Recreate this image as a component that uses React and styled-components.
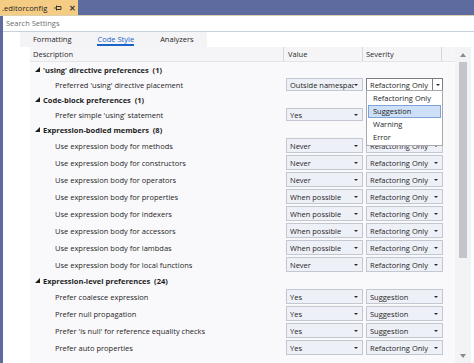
import React from 'react'
import styled, { createGlobalStyle } from 'styled-components'

const GlobalStyle = createGlobalStyle`
  html, body {
    margin: 0;
    padding: 0;
    background: #5d6b9e;
  }
  body {
    font-family: "Open Sans", "Noto Sans", sans-serif;
    color: #1e1e1e;
  }
`

const groups = [
  {
    title: "'using' directive preferences",
    count: 1,
    rowHeight: 15,
    items: [
      { label: "Preferred 'using' directive placement", value: 'Outside namespac', severity: 'Refactoring Only', open: true },
    ],
  },
  {
    title: 'Code-block preferences',
    count: 1,
    rowHeight: 15,
    items: [{ label: "Prefer simple 'using' statement", value: 'Yes', severity: 'Suggestion' }],
  },
  {
    title: 'Expression-bodied members',
    count: 8,
    rowHeight: 17,
    items: [
      { label: 'Use expression body for methods', value: 'Never', severity: 'Refactoring Only' },
      { label: 'Use expression body for constructors', value: 'Never', severity: 'Refactoring Only' },
      { label: 'Use expression body for operators', value: 'Never', severity: 'Refactoring Only' },
      { label: 'Use expression body for properties', value: 'When possible', severity: 'Refactoring Only' },
      { label: 'Use expression body for indexers', value: 'When possible', severity: 'Refactoring Only' },
      { label: 'Use expression body for accessors', value: 'When possible', severity: 'Refactoring Only' },
      { label: 'Use expression body for lambdas', value: 'When possible', severity: 'Refactoring Only' },
      { label: 'Use expression body for local functions', value: 'Never', severity: 'Refactoring Only' },
    ],
  },
  {
    title: 'Expression-level preferences',
    count: 24,
    rowHeight: 17,
    items: [
      { label: 'Prefer coalesce expression', value: 'Yes', severity: 'Suggestion' },
      { label: 'Prefer null propagation', value: 'Yes', severity: 'Suggestion' },
      { label: "Prefer 'is null' for reference equality checks", value: 'Yes', severity: 'Suggestion' },
      { label: 'Prefer auto properties', value: 'Yes', severity: 'Refactoring Only' },
    ],
  },
]

const severities = ['Refactoring Only', 'Suggestion', 'Warning', 'Error']

function Combo({ text, height, offset, open }) {
  return (
    <ComboBox $h={height} $offset={offset} $open={open}>
      <ComboText>{text}</ComboText>
      {open ? (
        <DropButton>
          <Caret />
        </DropButton>
      ) : (
        <Caret $right />
      )}
      {open && (
        <Popup>
          {severities.map((s) => (
            <PopupItem key={s} $active={s === 'Suggestion'}>
              {s}
            </PopupItem>
          ))}
        </Popup>
      )}
    </ComboBox>
  )
}

export default function App() {
  return (
    <>
      <GlobalStyle />
      <Window>
        <TabStrip>
          <DocTab>
            <DocTitle>.editorconfig</DocTitle>
            <svg width="8" height="6" viewBox="0 0 8 6">
              <path d="M0 3H2.5M2.5 0.5V5.5M2.5 1.5H7V4.5H2.5" fill="none" stroke="#3a3a3a" strokeWidth="1" />
            </svg>
            <CloseGlyph>✕</CloseGlyph>
          </DocTab>
        </TabStrip>
        <Panel>
          <SearchBox>Search Settings</SearchBox>
          <Tabs>
            <TabLink>Formatting</TabLink>
            <TabLink $active>Code Style</TabLink>
            <TabLink>Analyzers</TabLink>
          </Tabs>
          <TableArea>
            <Grid>
              <HeaderRow>
                <HeaderCell $pad={3}>Description</HeaderCell>
                <HeaderCell $pad={4}>Value</HeaderCell>
                <HeaderCell $pad={3}>Severity</HeaderCell>
                <HeaderTail />
              </HeaderRow>
              {groups.map((g) => (
                <React.Fragment key={g.title}>
                  <GroupRow>
                    <svg width="5" height="5" viewBox="0 0 5 5">
                      <polygon points="5,0 5,5 0,5" fill="#1e1e1e" />
                    </svg>
                    <span>
                      {g.title}&nbsp;&nbsp;({g.count})
                    </span>
                  </GroupRow>
                  {g.items.map((it) => (
                    <ItemRow key={it.label} $h={g.rowHeight}>
                      <ItemLabel>{it.label}</ItemLabel>
                      <Combo text={it.value} height={g.rowHeight - 2} offset={2} />
                      <Combo text={it.severity} height={g.rowHeight - 2} offset={3} open={it.open} />
                    </ItemRow>
                  ))}
                </React.Fragment>
              ))}
            </Grid>
            <ScrollBar>
              <ScrollArrow>
                <svg width="6" height="4" viewBox="0 0 6 4">
                  <polygon points="0,4 6,4 3,0" fill="#8a8a8e" />
                </svg>
              </ScrollArrow>
              <Track>
                <Thumb />
              </Track>
              <ScrollArrow>
                <svg width="6" height="4" viewBox="0 0 6 4">
                  <polygon points="0,0 6,0 3,4" fill="#8a8a8e" />
                </svg>
              </ScrollArrow>
            </ScrollBar>
          </TableArea>
        </Panel>
      </Window>
    </>
  )
}

const Window = styled.div`
  display: flex;
  flex-direction: column;
  width: 474px;
  height: 363px;
  overflow: hidden;
  background: #5d6b9e;
`

const TabStrip = styled.div`
  display: flex;
  height: 15px;
  flex-shrink: 0;
  border-bottom: 1px solid #ddd0ae;
`

const DocTab = styled.div`
  display: flex;
  align-items: center;
  gap: 7px;
  width: 78px;
  padding-left: 2px;
  box-sizing: border-box;
  background: #f5cc84;
  font-size: 7.6px;
  color: #1e1e1e;
`

const DocTitle = styled.span`
  letter-spacing: 0.05px;
`

const CloseGlyph = styled.span`
  font-size: 7.5px;
  font-weight: 700;
  color: #3a3a3a;
`

const Panel = styled.div`
  flex: 1;
  display: flex;
  flex-direction: column;
  margin-left: 3px;
  background: #fff;
  min-height: 0;
`

const SearchBox = styled.div`
  height: 15px;
  line-height: 15px;
  padding-left: 3px;
  font-size: 7.5px;
  color: #6e6e6e;
  border-bottom: 1px solid #c7d0df;
  flex-shrink: 0;
`

const Tabs = styled.div`
  display: flex;
  align-self: flex-start;
  height: 15px;
  margin-left: 17px;
  padding: 0 13px;
  background: #f4f4f6;
  flex-shrink: 0;
`

const TabLink = styled.div`
  margin: 2px 13px 0 0;
  padding-right: 13px;
  height: 10px;
  line-height: 10px;
  font-size: 7.5px;
  color: ${(p) => (p.$active ? '#1b64c8' : '#1e1e1e')};
  &:last-child {
    margin-right: 0;
    padding-right: 0;
  }
  & {
    box-shadow: ${(p) => (p.$active ? 'inset 0 -2px 0 #1b64c8' : 'none')};
    padding-bottom: 2px;
    padding-right: 0;
    margin-right: 26px;
  }
`

const TableArea = styled.div`
  flex: 1;
  display: flex;
  margin-left: 27px;
  min-height: 0;
  overflow: hidden;
`

const Grid = styled.div`
  display: flex;
  flex-direction: column;
  width: 425px;
  background: #f9f9fb;
`

const HeaderRow = styled.div`
  display: grid;
  grid-template-columns: 254px 79px 79px 13px;
  height: 15px;
  flex-shrink: 0;
  background: #f5f5f7;
  border-bottom: 1px solid #e3e3e8;
  box-sizing: border-box;
`

const HeaderCell = styled.div`
  display: flex;
  align-items: center;
  padding-left: ${(p) => p.$pad}px;
  font-size: 7.5px;
  color: #2a2a2a;
  border-right: 1px solid #d6d6dc;
`

const HeaderTail = styled.div``

const GroupRow = styled.div`
  display: flex;
  align-items: center;
  gap: 3px;
  height: 15px;
  flex-shrink: 0;
  padding-left: 5px;
  font-size: 7.5px;
  font-weight: 700;
`

const ItemRow = styled.div`
  display: grid;
  grid-template-columns: 254px 79px 79px;
  align-items: center;
  height: ${(p) => p.$h}px;
  flex-shrink: 0;
`

const ItemLabel = styled.div`
  padding-left: 25px;
  font-size: 7.5px;
  white-space: nowrap;
`

const ComboBox = styled.div`
  position: relative;
  display: flex;
  align-items: center;
  width: 77px;
  height: ${(p) => p.$h}px;
  margin-left: ${(p) => p.$offset}px;
  box-sizing: border-box;
  padding-left: 3px;
  background: ${(p) => (p.$open ? '#ffffff' : '#eef0f7')};
  border: 1px solid ${(p) => (p.$open ? '#7c7c82' : '#c3c7d1')};
  font-size: 7.5px;
`

const ComboText = styled.span`
  flex: 1;
  overflow: hidden;
  white-space: nowrap;
`

const Caret = styled.span`
  width: 0;
  height: 0;
  margin-right: ${(p) => (p.$right ? '4px' : '0')};
  border-left: 2px solid transparent;
  border-right: 2px solid transparent;
  border-top: 2px solid #2a2a2a;
`

const DropButton = styled.div`
  display: flex;
  align-items: center;
  justify-content: center;
  align-self: stretch;
  width: 9px;
  border-left: 1px solid #7c7c82;
`

const Popup = styled.div`
  position: absolute;
  top: 100%;
  left: -1px;
  z-index: 5;
  width: 77px;
  box-sizing: border-box;
  padding: 1px;
  background: #fff;
  border: 1px solid #a8a8ae;
`

const PopupItem = styled.div`
  height: 13px;
  line-height: 11px;
  box-sizing: border-box;
  padding-left: 4px;
  border: 1px solid ${(p) => (p.$active ? '#7ea3d8' : 'transparent')};
  background: ${(p) => (p.$active ? '#cde0f8' : 'transparent')};
  color: #1e1e1e;
`

const ScrollBar = styled.div`
  display: flex;
  flex-direction: column;
  width: 16px;
  background: #f3f3f5;
`

const ScrollArrow = styled.div`
  display: flex;
  align-items: center;
  justify-content: center;
  height: 15px;
  flex-shrink: 0;
`

const Track = styled.div`
  flex: 1;
  display: flex;
  justify-content: center;
`

const Thumb = styled.div`
  width: 8px;
  height: 196px;
  background: #c4c5cb;
`
